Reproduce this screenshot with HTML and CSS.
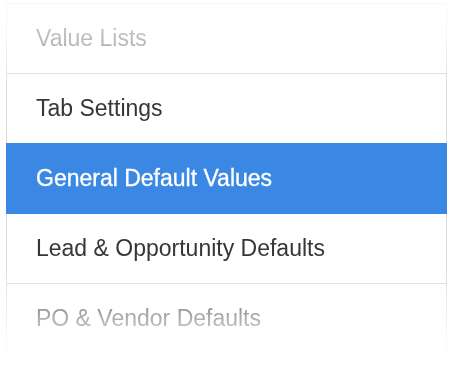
FILE: index.html
```html
<!DOCTYPE html>
<html>
<head>
<meta charset="utf-8">
<link rel="stylesheet" href="styles.css">
</head>
<body>
<div class="stage">
  <ul class="list">
    <li class="item">Value Lists</li>
    <li class="item">Tab Settings</li>
    <li class="item active">General Default Values</li>
    <li class="item">Lead &amp; Opportunity Defaults</li>
    <li class="item">PO &amp; Vendor Defaults</li>
  </ul>
</div>
</body>
</html>
```

FILE: styles.css
```css
html, body {
  margin: 0;
  padding: 0;
  background: #ffffff;
}
body {
  font-family: "Liberation Sans", Arial, sans-serif;
}
.stage {
  padding: 3px 27px 0 6px;
}
.list {
  list-style: none;
  margin: 0;
  padding: 0;
  box-shadow: 0 0 4px rgba(0, 0, 0, 0.08);
  -webkit-mask-image: linear-gradient(to bottom, rgba(0,0,0,0.2) 0, rgba(0,0,0,0.35) 40px, #000 80px, #000 270px, rgba(0,0,0,0.4) 315px, rgba(0,0,0,0.1) 100%);
  mask-image: linear-gradient(to bottom, rgba(0,0,0,0.2) 0, rgba(0,0,0,0.35) 40px, #000 80px, #000 270px, rgba(0,0,0,0.4) 315px, rgba(0,0,0,0.1) 100%);
}
.item {
  height: 69px;
  display: flex;
  align-items: center;
  padding-left: 29px;
  font-size: 23px;
  color: #363636;
  background: #ffffff;
  border: 1px solid #dddddd;
  margin-bottom: -1px;
}
.item.active {
  background: #3a88e4;
  border-color: #3a88e4;
  color: #ffffff;
  position: relative;
  z-index: 1;
  margin-left: -1px;
  padding-left: 30px;
  -webkit-text-stroke: 0.3px #ffffff;
}
```
